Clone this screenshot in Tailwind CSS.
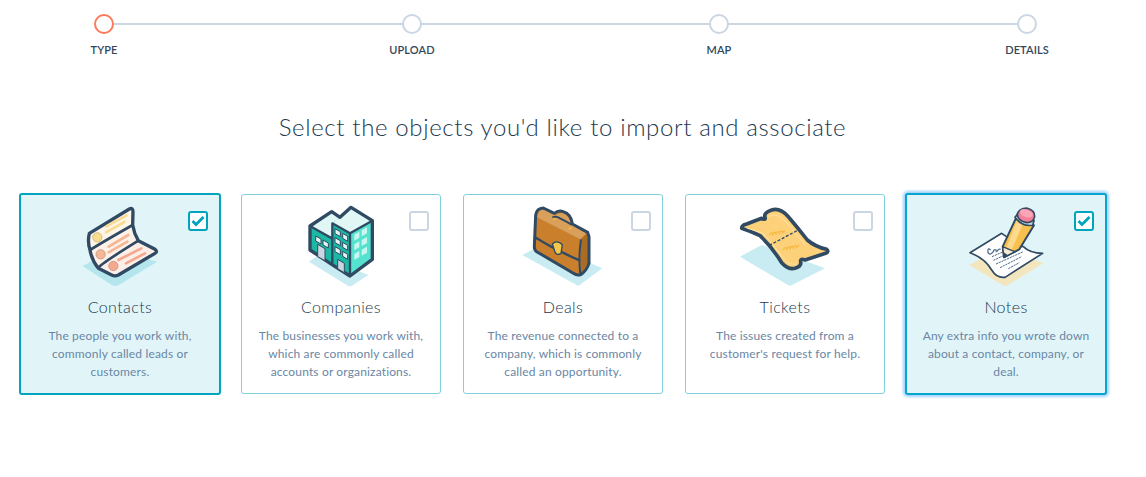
<!DOCTYPE html>
<html lang="en">
<head>
  <meta charset="UTF-8" />
  <title>Import objects</title>
  <script src="https://cdn.jsdelivr.net/npm/@tailwindcss/browser@4"></script>
</head>
<body class="w-[1146px] h-[477px] overflow-hidden bg-white text-[#33475b] font-['Lato','Open_Sans',sans-serif]">

  <!-- Stepper -->
  <div class="relative w-[1146px] h-[70px]">
    <div class="absolute left-[104px] top-[23px] w-[923px] h-[2px] bg-[#cbd6e2]"></div>
    <div class="absolute left-[64px] top-[14px] w-[80px] flex flex-col items-center">
      <div class="w-[20px] h-[20px] rounded-full border-2 border-[#ff7a59] bg-white"></div>
      <span class="mt-[9px] text-[11px] leading-[14px] font-semibold tracking-[0.1px]">TYPE</span>
    </div>
    <div class="absolute left-[372px] top-[14px] w-[80px] flex flex-col items-center">
      <div class="w-[20px] h-[20px] rounded-full border-2 border-[#cbd6e2] bg-white"></div>
      <span class="mt-[9px] text-[11px] leading-[14px] font-semibold tracking-[0.1px]">UPLOAD</span>
    </div>
    <div class="absolute left-[679px] top-[14px] w-[80px] flex flex-col items-center">
      <div class="w-[20px] h-[20px] rounded-full border-2 border-[#cbd6e2] bg-white"></div>
      <span class="mt-[9px] text-[11px] leading-[14px] font-semibold tracking-[0.1px]">MAP</span>
    </div>
    <div class="absolute left-[987px] top-[14px] w-[80px] flex flex-col items-center">
      <div class="w-[20px] h-[20px] rounded-full border-2 border-[#cbd6e2] bg-white"></div>
      <span class="mt-[9px] text-[11px] leading-[14px] font-semibold tracking-[0.1px]">DETAILS</span>
    </div>
  </div>

  <!-- Heading -->
  <h1 class="mt-[41px] pr-[21px] text-center text-[24px] leading-[32px] font-light tracking-[0.64px] text-[#22384e]">Select the objects you'd like to import and associate</h1>

  <!-- Cards -->
  <div class="mt-[50px] pl-[19px] flex items-start">

    <!-- Contacts -->
    <div class="relative w-[202px] h-[202px] rounded-[3px] border-2 border-[#00a4bd] bg-[#e1f5f9] flex flex-col items-center">
      <div class="absolute top-[16px] right-[11px] w-[20px] h-[20px] rounded-[3px] border-2 border-[#00a4bd] bg-white flex items-center justify-center">
        <svg width="14" height="12" viewBox="0 0 14 12"><path d="M1.5 6 L5 9.5 L12.5 2" fill="none" stroke="#00a4bd" stroke-width="2.8"/></svg>
      </div>
      <svg class="mt-[5px]" width="100" height="90" viewBox="0 0 300 270">
        <path d="M38 198 L130 150 L262 185 L145 256 Q135 260 125 255 Z" fill="#b5e6ee"/>
        <path d="M58 100 L178 27 Q188 22 189 34 L188 75 L60 150 Q52 125 58 100 Z" fill="#fff5e8"/>
        <path d="M60 150 L188 75 Q192 100 205 122 L85 203 Q65 180 60 150 Z" fill="#fdf1e8"/>
        <path d="M85 203 L205 122 L258 150 Q262 155 255 158 L145 225 Q135 230 125 225 Z" fill="#fdeeea"/>
        <path d="M60 150 Q100 125 188 75 M85 203 Q95 190 205 122" fill="none" stroke="#2f4a62" stroke-width="8"/>
        <path d="M58 100 L178 27 Q188 22 189 34 L188 75 Q192 100 205 122 L255 148 Q264 155 255 160 L145 225 Q135 230 125 225 L85 205 Q65 180 60 150 Q52 125 58 100 Z" fill="none" stroke="#2f4a62" stroke-width="10" stroke-linejoin="round"/>
        <circle cx="82" cy="112" r="14" fill="#f8dc90" stroke="#c4a86a" stroke-width="2"/>
        <circle cx="92" cy="163" r="14" fill="#f5b795" stroke="#b98a74" stroke-width="2"/>
        <circle cx="130" cy="198" r="14" fill="#f5a98c" stroke="#b98a74" stroke-width="2"/>
        <path d="M108 80 L170 46 M108 97 L163 66" stroke="#f8dc90" stroke-width="8" stroke-linecap="round"/>
        <path d="M116 140 L175 105 M116 157 L172 125" stroke="#f5b795" stroke-width="8" stroke-linecap="round"/>
        <path d="M145 180 L214 145 M168 190 L225 160" stroke="#f5a98c" stroke-width="8" stroke-linecap="round"/>
      </svg>
      <h2 class="mt-[7px] text-[16px] leading-[20px] font-light tracking-[0.4px] text-[#22384e]">Contacts</h2>
      <p class="mt-[10px] w-[170px] text-center text-[12px] leading-[18px] text-[#6a86a4] tracking-[0.15px]">The people you work with, commonly called leads or customers.</p>
    </div>

    <!-- Companies -->
    <div class="relative ml-[20px] mt-[1px] w-[200px] h-[200px] rounded-[3px] border border-[#7fd1de] bg-white flex flex-col items-center">
      <div class="absolute top-[16px] right-[11px] w-[20px] h-[20px] rounded-[3px] border-2 border-[#cbd6e2] bg-white"></div>
      <svg class="mt-[5px]" width="90" height="90" viewBox="3 0 270 270">
        <path d="M42 185 L70 165 L220 225 L170 258 Q165 260 160 258 Z" fill="#c9ecf3"/>
        <path d="M45 78 L110 35 L135 52 L168 22 L232 62 L232 178 L165 228 L110 193 L45 150 Z" fill="#1db8a3"/>
        <path d="M45 78 L110 35 L135 52 L112 70 L112 112 Z" fill="#e1f7f6"/>
        <path d="M112 70 L168 25 L232 62 L165 100 Z" fill="#e1f7f6"/>
        <path d="M165 100 L232 62 L232 178 L165 228 Z" fill="#55e3d0"/>
        <path d="M45 78 L110 115 M112 193 L112 70 L165 100 L165 228 M165 100 L232 62" fill="none" stroke="#2f4a62" stroke-width="7" stroke-linejoin="round"/>
        <path d="M45 78 L110 35 L135 52 L168 22 L232 62 L232 178 L165 228 L110 193 L45 150 Z" fill="none" stroke="#2f4a62" stroke-width="10" stroke-linejoin="round"/>
        <path d="M62 108 L78 117 V132 L62 123 Z M84 120 L100 129 V144 L84 135 Z" fill="#dff5f4" stroke="#2f4a62" stroke-width="3"/>
        <path d="M68 133 L90 146 V182 L68 170 Z M128 178 L148 190 V218 L128 206 Z" fill="#cbd6e2" stroke="#2f4a62" stroke-width="3"/>
        <path d="M120 86 L136 95 V110 L120 101 Z M143 100 L158 109 V124 L143 115 Z M120 113 L136 122 V137 L120 128 Z M143 127 L158 136 V151 L143 142 Z M120 140 L136 149 V164 L120 155 Z M143 154 L158 163 V178 L143 169 Z" fill="#dff5f4" stroke="#2f4a62" stroke-width="3"/>
        <path d="M178 104 L193 95 V113 L178 122 Z M200 91 L216 82 V100 L200 109 Z M178 133 L193 124 V142 L178 151 Z M200 120 L216 111 V129 L200 138 Z M178 162 L193 153 V171 L178 180 Z M200 149 L216 140 V158 L200 167 Z" fill="#c9f7ef"/>
      </svg>
      <h2 class="mt-[7px] text-[16px] leading-[20px] font-light tracking-[0.4px] text-[#22384e]">Companies</h2>
      <p class="mt-[10px] w-[170px] text-center text-[12px] leading-[18px] text-[#6a86a4] tracking-[0.15px]">The businesses you work with, which are commonly called accounts or organizations.</p>
    </div>

    <!-- Deals -->
    <div class="relative ml-[22px] mt-[1px] w-[200px] h-[200px] rounded-[3px] border border-[#7fd1de] bg-white flex flex-col items-center">
      <div class="absolute top-[16px] right-[11px] w-[20px] h-[20px] rounded-[3px] border-2 border-[#cbd6e2] bg-white"></div>
      <svg class="mt-[5px]" width="90" height="90" viewBox="9 0 270 270">
        <path d="M22 165 L90 130 L262 205 L190 258 Z" fill="#c9ecf3"/>
        <path d="M62 45 Q65 25 85 24 L118 40 Q130 30 145 35 Q168 42 172 72 L218 97 L222 110 L222 190 Q215 212 197 224 Q186 228 175 220 L65 155 Q58 150 58 140 Z" fill="#c97f2b"/>
        <path d="M66 52 Q68 30 85 28 L118 44 L172 76 L214 99 L196 118 Z" fill="#d9a05c"/>
        <path d="M118 50 Q130 36 146 40 Q162 46 168 74 Z" fill="#d9a05c"/>
        <path d="M198 118 L218 100 L220 190 L198 220 Z" fill="#ac6b22"/>
        <path d="M60 112 Q120 150 196 182" fill="none" stroke="#2f4a62" stroke-width="7"/>
        <path d="M198 118 Q190 170 196 224" fill="none" stroke="#2f4a62" stroke-width="6"/>
        <path d="M112 52 Q125 48 135 55 Q150 62 170 74" fill="none" stroke="#2f4a62" stroke-width="6"/>
        <path d="M62 45 Q65 25 85 24 L118 40 Q130 30 145 35 Q168 42 172 72 L218 97 L222 110 L222 190 Q215 212 197 224 Q186 228 175 220 L65 155 Q58 150 58 140 Z" fill="none" stroke="#2f4a62" stroke-width="9" stroke-linejoin="round"/>
        <circle cx="118" cy="57" r="4" fill="#f5b83d"/>
        <circle cx="165" cy="85" r="4" fill="#f5b83d"/>
        <path d="M112 132 Q125 118 142 134 L138 160 Q122 170 118 150 Z" fill="#f4c84e" stroke="#2f4a62" stroke-width="4" stroke-linejoin="round"/>
      </svg>
      <h2 class="mt-[7px] text-[16px] leading-[20px] font-light tracking-[0.4px] text-[#22384e]">Deals</h2>
      <p class="mt-[10px] w-[170px] text-center text-[12px] leading-[18px] text-[#6a86a4] tracking-[0.15px]">The revenue connected to a company, which is commonly called an opportunity.</p>
    </div>

    <!-- Tickets -->
    <div class="relative ml-[22px] mt-[1px] w-[200px] h-[200px] rounded-[3px] border border-[#7fd1de] bg-white flex flex-col items-center">
      <div class="absolute top-[16px] right-[11px] w-[20px] h-[20px] rounded-[3px] border-2 border-[#cbd6e2] bg-white"></div>
      <svg class="mt-[5px]" width="100" height="90" viewBox="15 0 300 270">
        <path d="M30 170 L95 135 L285 205 L185 256 Q180 258 175 256 Z" fill="#c9ecf3"/>
        <path d="M35 85 Q35 75 50 72 L95 55 Q108 62 105 52 Q100 38 125 30 Q150 22 175 50 Q205 85 232 120 Q255 140 290 148 Q298 155 287 160 L225 180 Q210 174 212 185 Q215 198 195 205 Q175 210 155 188 Q125 140 90 107 Q65 95 35 85 Z" fill="#fdd07a" stroke="#2f4a62" stroke-width="11" stroke-linejoin="round"/>
        <path d="M50 84 Q75 92 100 100 Q130 135 160 175 Q178 198 198 192 M115 50 Q135 35 165 62 Q195 100 225 133" fill="none" stroke="#fee3a8" stroke-width="3"/>
        <path d="M118 136 L205 90" stroke="#2f4a62" stroke-width="4" stroke-dasharray="9 5"/>
        <path d="M118 106 q7 -14 10 -2 q7 -14 10 -2 q7 -14 10 -2 q7 -14 10 -2 q5 -6 7 -6" fill="none" stroke="#f6b73c" stroke-width="3.5"/>
        <path d="M160 150 q7 -14 10 -2 q7 -14 10 -2 q7 -14 10 -2 q7 -14 10 -2 q5 -6 7 -6" fill="none" stroke="#f6b73c" stroke-width="3.5"/>
      </svg>
      <h2 class="mt-[7px] text-[16px] leading-[20px] font-light tracking-[0.4px] text-[#22384e]">Tickets</h2>
      <p class="mt-[10px] w-[170px] text-center text-[12px] leading-[18px] text-[#6a86a4] tracking-[0.15px]">The issues created from a customer's request for help.</p>
    </div>

    <!-- Notes -->
    <div class="relative ml-[20px] w-[202px] h-[202px] rounded-[3px] border-2 border-[#05a5cf] bg-[#e1f5f9] shadow-[0_0_3px_2px_#9fd0fa] flex flex-col items-center">
      <div class="absolute top-[16px] right-[11px] w-[20px] h-[20px] rounded-[3px] border-2 border-[#00a4bd] bg-white flex items-center justify-center">
        <svg width="14" height="12" viewBox="0 0 14 12"><path d="M1.5 6 L5 9.5 L12.5 2" fill="none" stroke="#00a4bd" stroke-width="2.8"/></svg>
      </div>
      <svg class="mt-[5px]" width="100" height="90" viewBox="-12 0 300 270">
        <path d="M28 195 L130 140 L250 190 L142 256 Q135 260 128 256 Z" fill="#f3e6be"/>
        <path d="M30 158 L125 100 Q160 125 190 140 Q210 160 248 160 L135 232 Q110 235 95 210 Q75 175 30 158 Z" fill="#fff" stroke="#2f4a62" stroke-width="5" stroke-linejoin="round"/>
        <path d="M92 150 Q82 140 84 158 Q90 168 100 155 Q102 146 108 150 Q108 160 114 150 Q118 146 122 148" fill="none" stroke="#516f90" stroke-width="4"/>
        <path d="M96 170 L128 156 M100 181 L185 142 M108 192 L190 155 M120 203 L185 170 M145 206 L178 188" fill="none" stroke="#516f90" stroke-width="3" stroke-dasharray="7 2"/>
        <path d="M128 140 L170 50 L222 76 L178 148 L132 172 Z" fill="#f8c04e" stroke="#2f4a62" stroke-width="6" stroke-linejoin="round"/>
        <path d="M172 58 L140 142 L155 150 L190 70 Z" fill="#fcd98c"/>
        <path d="M128 140 Q150 150 165 155 L132 172 Z" fill="#f7ead0" stroke="#2f4a62" stroke-width="4" stroke-linejoin="round"/>
        <path d="M129 155 L143 165 L132 172 Z" fill="#2f4a62"/>
        <path d="M165 52 Q185 80 218 76 L222 62 L178 36 Z" fill="#cbd6e2" stroke="#2f4a62" stroke-width="5" stroke-linejoin="round"/>
        <path d="M172 42 Q172 62 200 68 Q220 68 224 50 Q225 30 200 24 Q178 24 172 42 Z" fill="#f2809a" stroke="#2f4a62" stroke-width="5" stroke-linejoin="round"/>
        <ellipse cx="199" cy="40" rx="20" ry="11" transform="rotate(20 199 40)" fill="#fba6b8"/>
      </svg>
      <h2 class="mt-[7px] text-[16px] leading-[20px] font-light tracking-[0.4px] text-[#22384e]">Notes</h2>
      <p class="mt-[10px] w-[170px] text-center text-[12px] leading-[18px] text-[#6a86a4] tracking-[0.15px]">Any extra info you wrote down about a contact, company, or deal.</p>
    </div>
  </div>

</body>
</html>
